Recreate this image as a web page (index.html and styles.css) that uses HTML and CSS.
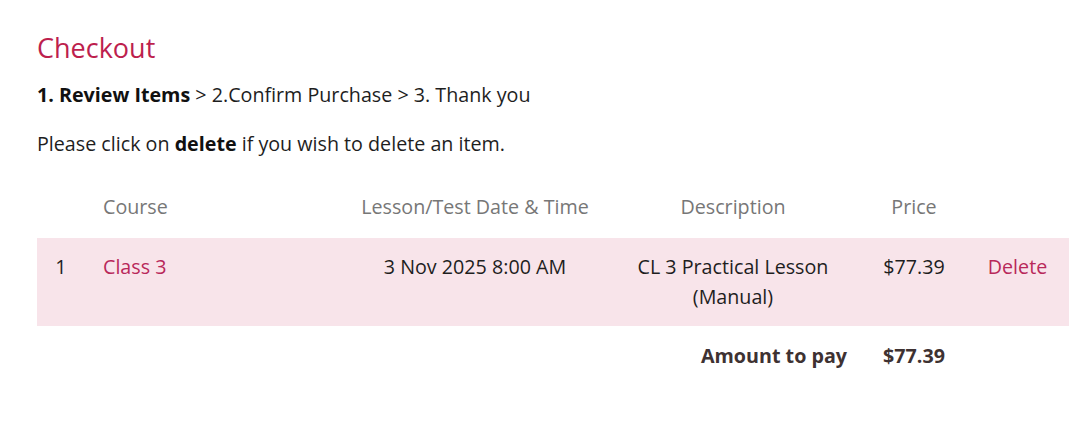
FILE: index.html
```html
<!DOCTYPE html>
<html lang="en">
<head>
<meta charset="utf-8">
<title>Checkout</title>
<link rel="stylesheet" href="styles.css">
</head>
<body>
<main class="page">
  <h1 class="title">Checkout</h1>
  <p class="steps"><strong>1. Review Items</strong> &gt; 2.Confirm Purchase &gt; 3. Thank you</p>
  <p class="note">Please click on <strong>delete</strong> if you wish to delete an item.</p>
  <table class="cart">
    <colgroup>
      <col class="c-num"><col class="c-course"><col class="c-date"><col class="c-desc"><col class="c-price"><col class="c-del">
    </colgroup>
    <thead>
      <tr>
        <th></th>
        <th class="left">Course</th>
        <th>Lesson/Test Date &amp; Time</th>
        <th class="desc">Description</th>
        <th>Price</th>
        <th></th>
      </tr>
    </thead>
    <tbody>
      <tr class="item">
        <td>1</td>
        <td class="left"><a class="link" href="#">Class 3</a></td>
        <td>3 Nov 2025 8:00 AM</td>
        <td class="desc">CL 3 Practical Lesson<br>(Manual)</td>
        <td>$77.39</td>
        <td><a class="link" href="#">Delete</a></td>
      </tr>
      <tr class="total">
        <td></td><td></td><td></td>
        <td class="right">Amount to pay</td>
        <td>$77.39</td>
        <td></td>
      </tr>
    </tbody>
  </table>
</main>
</body>
</html>
```
FILE: styles.css
```css
* { box-sizing: border-box; }
html, body { margin: 0; padding: 0; background: #fff; }
body {
  font-family: "Open Sans", "Liberation Sans", sans-serif;
  color: #1e1e1e;
  font-size: 19.7px;
}
.page { padding: 28px 11px 0 37px; }
.title {
  margin: 0;
  font-weight: 400;
  font-size: 27px;
  line-height: 40px;
  color: #bd1f4e;
}
.steps { margin: 12px 0 0; line-height: 30px; }
.steps strong, .note strong { font-weight: 700; color: #111; }
.note { margin: 19px 0 0; line-height: 30px; }
.cart {
  margin-top: 27px;
  width: 1032px;
  border-collapse: collapse;
  table-layout: fixed;
}
.c-num { width: 48px; }
.c-course { width: 275px; }
.c-date { width: 230px; }
.c-desc { width: 278px; }
.c-price { width: 92px; }
.c-del { width: 109px; }
.cart th {
  font-weight: 400;
  color: #777;
  text-align: center;
  height: 52px;
  padding: 0 0 10px;
  vertical-align: middle;
  line-height: 30px;
}
.cart td {
  text-align: center;
  vertical-align: top;
  line-height: 30px;
  padding: 14px 0 14px;
}
.cart .left { text-align: left; padding-left: 18px; }
.cart .desc { padding-left: 8px; }
.cart .right { text-align: right; padding-right: 21px; }
.item td { background: #f8e4ea; height: 88px; }
.item td:last-child { padding-left: 6px; }
.link { color: #b8285a; text-decoration: none; }
.total td {
  font-weight: 700;
  color: #3e3232;
  padding: 15px 0;
}
.total td.right { padding-right: 21px; }
```
